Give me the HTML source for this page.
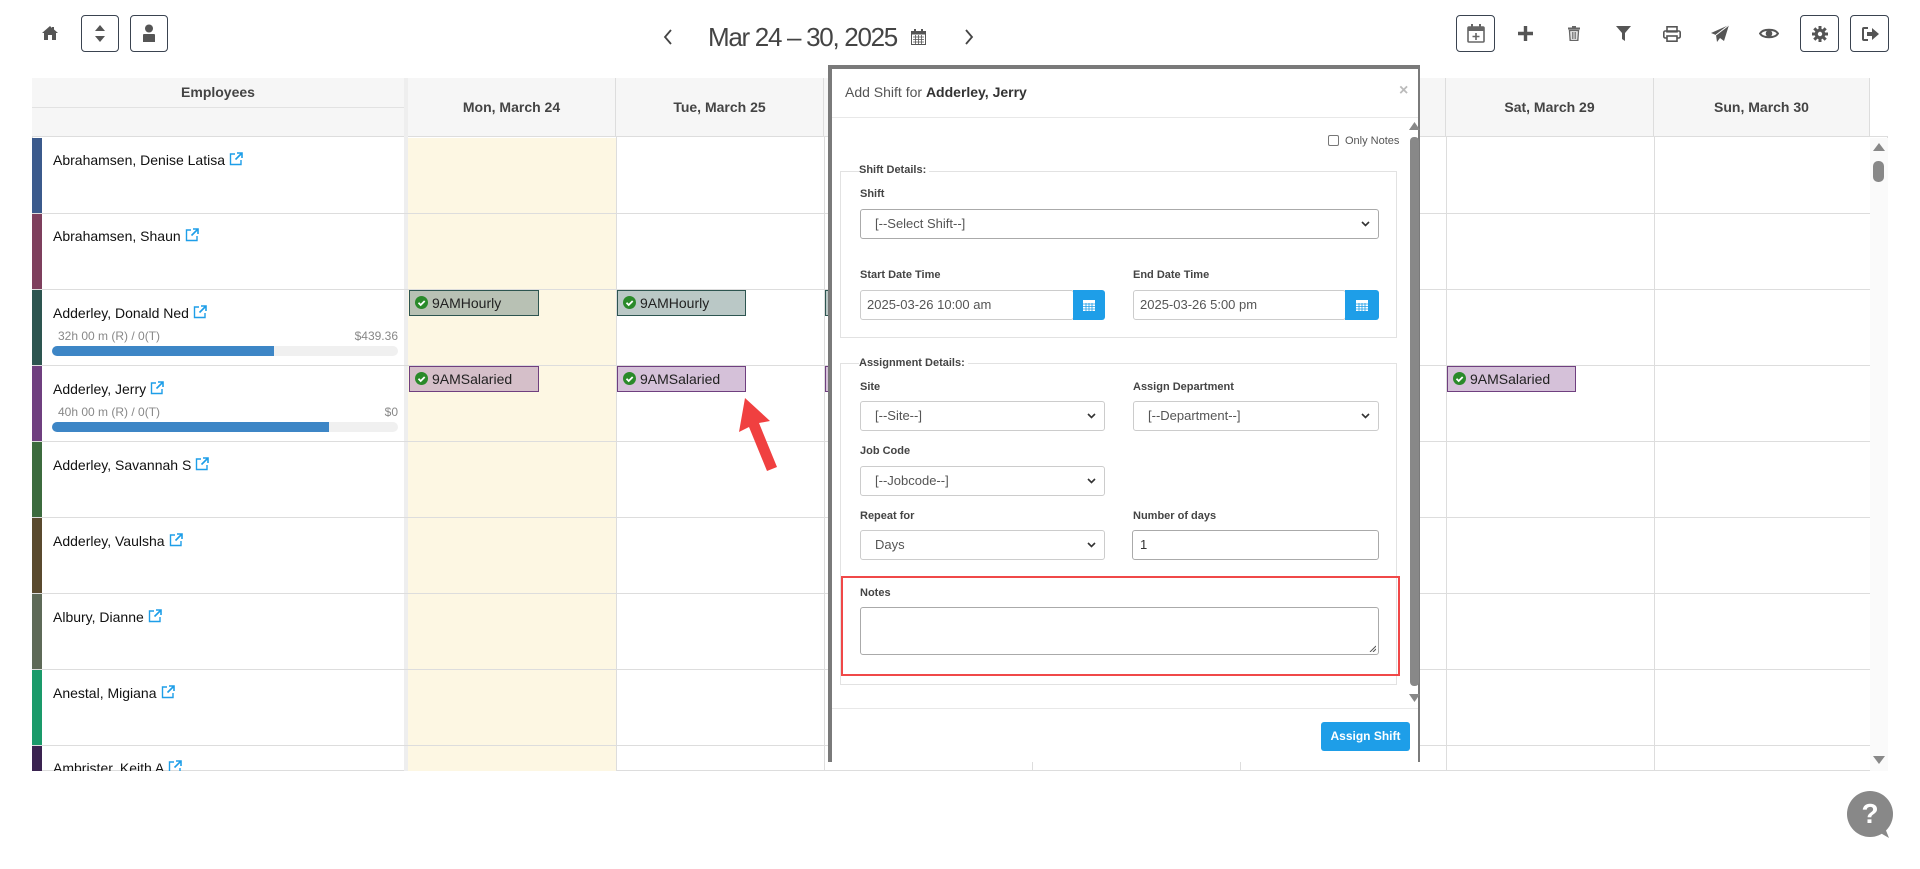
<!DOCTYPE html>
<html><head><meta charset="utf-8">
<style>
*{box-sizing:border-box;margin:0;padding:0}
body{width:1920px;height:869px;position:relative;background:#fff;font-family:"Liberation Sans",Arial,sans-serif;overflow:hidden;color:#222}
.a{position:absolute}
.btn{position:absolute;border:1.5px solid #3a4350;border-radius:4px;background:#fff}
.ico{position:absolute}
.hl{position:absolute;height:1px;background:#ddd}
.vl{position:absolute;width:1px;background:#ddd}
.dh{position:absolute;top:78px;height:59px;font-weight:bold;font-size:14px;color:#444;text-align:center;line-height:59px;background:#f6f6f6;border-right:1px solid #ddd;border-bottom:1px solid #ddd}
.name{position:absolute;left:53px;font-size:14px;color:#111}
.ext{display:inline-block;vertical-align:-1px;margin-left:4px}
.cb{position:absolute;left:32px;width:10px}
.stat{position:absolute;left:58px;width:340px;font-size:12px;color:#888}
.bar{position:absolute;left:52px;width:346px;height:10px;background:#f0f0f0;border-radius:5px;overflow:hidden}
.bar i{display:block;height:10px;background:#3d86c6}
.shift{position:absolute;height:26px;font-size:14px;color:#222;line-height:24px;padding-left:22px}
.shift svg{position:absolute;left:5px;top:5px}
.lbl{position:absolute;font-size:11px;font-weight:bold;color:#444}
.inp{position:absolute;border:1px solid #ccc;border-radius:3px;background:#fff;font-size:13px;color:#555;padding-left:14px}
.cal{position:absolute;background:#1e9ee8;border-radius:0 3px 3px 0}
.chev{position:absolute;right:8px;top:50%;margin-top:-3px}
</style></head><body>

<!-- toolbar left -->
<svg class="ico" style="left:42px;top:26px" width="16" height="14" viewBox="0 0 16 14"><path d="M8 0L0 7h2v7h4V9h4v5h4V7h2L12 3.5V1h-2v1z" fill="#555"/></svg>
<div class="btn" style="left:81px;top:15px;width:38px;height:37px"><svg class="ico" style="left:13px;top:9px" width="10" height="17" viewBox="0 0 10 17"><path d="M5 0L10 6H0zM5 17L0 11h10z" fill="#555"/></svg></div>
<div class="btn" style="left:130px;top:15px;width:38px;height:37px"><svg class="ico" style="left:12px;top:8px" width="12" height="18" viewBox="0 0 12 18"><circle cx="6" cy="4.5" r="4" fill="#555"/><path d="M1 10h10a1 1 0 0 1 1 1v7H0v-7a1 1 0 0 1 1-1z" fill="#555"/></svg></div>

<!-- title -->
<svg class="ico" style="left:663px;top:29px" width="10" height="16" viewBox="0 0 10 16"><path d="M8 1L2 8l6 7" stroke="#444" stroke-width="1.8" fill="none"/></svg>
<div class="a" style="left:708px;top:22px;font-size:26px;color:#444;letter-spacing:-1.3px;white-space:nowrap">Mar 24 – 30, 2025</div>
<svg class="ico" style="left:911px;top:29px" width="15" height="16" viewBox="0 0 15 16"><rect x="0.5" y="2.5" width="14" height="13" fill="none" stroke="#555"/><rect x="0.5" y="2.5" width="14" height="3" fill="#555"/><rect x="3" y="0" width="2" height="4" fill="#555"/><rect x="10" y="0" width="2" height="4" fill="#555"/><path d="M2 8h11M2 10.5h11M2 13h11M4.5 6v9M7.5 6v9M10.5 6v9" stroke="#555" stroke-width=".8"/></svg>
<svg class="ico" style="left:964px;top:29px" width="10" height="16" viewBox="0 0 10 16"><path d="M2 1l6 7-6 7" stroke="#444" stroke-width="1.8" fill="none"/></svg>

<!-- toolbar right -->
<div class="btn" style="left:1456px;top:15px;width:39px;height:37px"><svg class="ico" style="left:10px;top:8px" width="18" height="19" viewBox="0 0 18 19"><rect x="1" y="3" width="16" height="15" rx="1" fill="none" stroke="#666" stroke-width="1.6"/><rect x="1" y="3" width="16" height="4" fill="#666"/><rect x="4" y="0" width="2" height="5" fill="#666"/><rect x="12" y="0" width="2" height="5" fill="#666"/><path d="M9 9v7M5.5 12.5h7" stroke="#666" stroke-width="1.6"/></svg></div>
<svg class="ico" style="left:1518px;top:26px" width="15" height="15" viewBox="0 0 15 15"><path d="M7.5 0v15M0 7.5h15" stroke="#555" stroke-width="3.4"/></svg>
<svg class="ico" style="left:1568px;top:26px" width="12" height="15" viewBox="0 0 12 15"><rect x="0" y="1.5" width="12" height="2" fill="#666"/><rect x="4" y="0" width="4" height="2" fill="#666"/><path d="M1.5 4.5h9l-.7 10H2.2z" fill="none" stroke="#666" stroke-width="1.4"/><path d="M4.3 6v7M6 6v7M7.7 6v7" stroke="#666" stroke-width="1"/></svg>
<svg class="ico" style="left:1616px;top:26px" width="15" height="15" viewBox="0 0 15 15"><path d="M0 0h15L9 7v8L6 13V7z" fill="#555"/></svg>
<svg class="ico" style="left:1663px;top:26px" width="18" height="16" viewBox="0 0 18 16"><rect x="4" y="0.8" width="10" height="5" fill="none" stroke="#555" stroke-width="1.6"/><rect x="0.8" y="5" width="16.4" height="7" rx="1.5" fill="none" stroke="#555" stroke-width="1.6"/><rect x="4" y="10" width="10" height="5.2" fill="#fff" stroke="#555" stroke-width="1.6"/></svg>
<svg class="ico" style="left:1711px;top:25px" width="18" height="17" viewBox="0 0 18 17"><path d="M18 0L0 8l5 2 1 7 3-4 4 3z" fill="#555"/><path d="M5 10l13-10" stroke="#fff" stroke-width="1"/></svg>
<svg class="ico" style="left:1759px;top:27px" width="20" height="13" viewBox="0 0 20 13"><path d="M1 6.5C4 1.5 16 1.5 19 6.5 16 11.5 4 11.5 1 6.5z" fill="none" stroke="#555" stroke-width="2"/><circle cx="10" cy="6.5" r="3.3" fill="#555"/></svg>
<div class="btn" style="left:1800px;top:15px;width:39px;height:37px"><svg class="ico" style="left:11px;top:10px" width="16" height="16" viewBox="0 0 16 16"><circle cx="8" cy="8" r="5.3" fill="#555"/><path d="M8 0v16M0 8h16M2.3 2.3l11.4 11.4M13.7 2.3L2.3 13.7" stroke="#555" stroke-width="3"/><circle cx="8" cy="8" r="2.2" fill="#fff"/></svg></div>
<div class="btn" style="left:1850px;top:15px;width:39px;height:37px"><svg class="ico" style="left:11px;top:11px" width="17" height="14" viewBox="0 0 17 14"><path d="M6 1H2a1 1 0 0 0-1 1v10a1 1 0 0 0 1 1h4" stroke="#555" stroke-width="2" fill="none"/><path d="M5 5h5V1l7 6-7 6V9H5z" fill="#555"/></svg></div>

<!-- table -->
<div class="a" style="left:32px;top:78px;width:1856px;height:693px;border:1px solid #ddd"></div>
<div class="a" style="left:32px;top:78px;width:372px;height:59px;background:#f6f6f6;border-bottom:1px solid #ddd"></div>
<div class="hl" style="left:32px;top:107px;width:372px;background:#e2e2e2"></div>
<div class="a" style="left:32px;top:78px;width:372px;height:29px;text-align:center;font-weight:bold;font-size:14px;color:#444;line-height:29px">Employees</div>
<div class="a" style="left:404px;top:78px;width:4px;height:693px;background:#eee"></div>
<div class="dh" style="left:408px;width:208px">Mon, March 24</div>
<div class="dh" style="left:616px;width:208px">Tue, March 25</div>
<div class="dh" style="left:824px;width:208px">Wed, March 26</div>
<div class="dh" style="left:1032px;width:208px">Thu, March 27</div>
<div class="dh" style="left:1240px;width:206px">Fri, March 28</div>
<div class="dh" style="left:1446px;width:208px">Sat, March 29</div>
<div class="dh" style="left:1654px;width:216px">Sun, March 30</div>
<div class="a" style="left:1870px;top:78px;width:18px;height:59px;background:#fff;border-bottom:1px solid #ddd"></div>
<!-- today column -->
<div class="a" style="left:408px;top:138px;width:208px;height:633px;background:#fdf7e3"></div>
<!-- vertical lines -->
<div class="vl" style="left:616px;top:137px;height:634px"></div>
<div class="vl" style="left:824px;top:137px;height:634px"></div>
<div class="vl" style="left:1032px;top:137px;height:634px"></div>
<div class="vl" style="left:1240px;top:137px;height:634px"></div>
<div class="vl" style="left:1446px;top:137px;height:634px"></div>
<div class="vl" style="left:1654px;top:137px;height:634px"></div>
<!-- horizontal lines -->
<div class="hl" style="left:32px;top:213px;width:1838px"></div>
<div class="hl" style="left:32px;top:289px;width:1838px"></div>
<div class="hl" style="left:32px;top:365px;width:1838px"></div>
<div class="hl" style="left:32px;top:441px;width:1838px"></div>
<div class="hl" style="left:32px;top:517px;width:1838px"></div>
<div class="hl" style="left:32px;top:593px;width:1838px"></div>
<div class="hl" style="left:32px;top:669px;width:1838px"></div>
<div class="hl" style="left:32px;top:745px;width:1838px"></div>
<!-- scrollbar -->
<div class="a" style="left:1870px;top:138px;width:18px;height:633px;background:#fafafa"></div>
<svg class="ico" style="left:1873px;top:143px" width="12" height="9"><path d="M6 0l6 8H0z" fill="#888"/></svg>
<div class="a" style="left:1873px;top:161px;width:11px;height:21px;background:#888;border-radius:5px"></div>
<svg class="ico" style="left:1873px;top:756px" width="12" height="9"><path d="M0 0h12L6 8z" fill="#888"/></svg>

<!-- color bars -->
<div class="cb" style="top:138px;height:75px;background:#3b5a8c"></div>
<div class="cb" style="top:214px;height:75px;background:#7e3f5d"></div>
<div class="cb" style="top:290px;height:75px;background:#2d5550"></div>
<div class="cb" style="top:366px;height:75px;background:#6f3f7f"></div>
<div class="cb" style="top:442px;height:75px;background:#3c6b3e"></div>
<div class="cb" style="top:518px;height:75px;background:#5a4a2e"></div>
<div class="cb" style="top:594px;height:75px;background:#5e6a58"></div>
<div class="cb" style="top:670px;height:75px;background:#1a9a6a"></div>
<div class="cb" style="top:746px;height:25px;background:#3a2350"></div>

<!-- names -->
<div class="name" style="top:152px">Abrahamsen, Denise Latisa<svg class="ext" width="14" height="14" viewBox="0 0 14 14"><path d="M6 2H1.5v10.5H12V8" fill="none" stroke="#1e9ee8" stroke-width="1.4"/><path d="M8 1h5v5M13 1L6.5 7.5" fill="none" stroke="#1e9ee8" stroke-width="1.6"/></svg></div>
<div class="name" style="top:228px">Abrahamsen, Shaun<svg class="ext" width="14" height="14" viewBox="0 0 14 14"><path d="M6 2H1.5v10.5H12V8" fill="none" stroke="#1e9ee8" stroke-width="1.4"/><path d="M8 1h5v5M13 1L6.5 7.5" fill="none" stroke="#1e9ee8" stroke-width="1.6"/></svg></div>
<div class="name" style="top:305px">Adderley, Donald Ned<svg class="ext" width="14" height="14" viewBox="0 0 14 14"><path d="M6 2H1.5v10.5H12V8" fill="none" stroke="#1e9ee8" stroke-width="1.4"/><path d="M8 1h5v5M13 1L6.5 7.5" fill="none" stroke="#1e9ee8" stroke-width="1.6"/></svg></div>
<div class="stat" style="top:329px">32h 00 m (R) / 0(T)<span style="float:right">$439.36</span></div>
<div class="bar" style="top:346px"><i style="width:222px"></i></div>
<div class="name" style="top:381px">Adderley, Jerry<svg class="ext" width="14" height="14" viewBox="0 0 14 14"><path d="M6 2H1.5v10.5H12V8" fill="none" stroke="#1e9ee8" stroke-width="1.4"/><path d="M8 1h5v5M13 1L6.5 7.5" fill="none" stroke="#1e9ee8" stroke-width="1.6"/></svg></div>
<div class="stat" style="top:405px">40h 00 m (R) / 0(T)<span style="float:right">$0</span></div>
<div class="bar" style="top:422px"><i style="width:277px"></i></div>
<div class="name" style="top:457px">Adderley, Savannah S<svg class="ext" width="14" height="14" viewBox="0 0 14 14"><path d="M6 2H1.5v10.5H12V8" fill="none" stroke="#1e9ee8" stroke-width="1.4"/><path d="M8 1h5v5M13 1L6.5 7.5" fill="none" stroke="#1e9ee8" stroke-width="1.6"/></svg></div>
<div class="name" style="top:533px">Adderley, Vaulsha<svg class="ext" width="14" height="14" viewBox="0 0 14 14"><path d="M6 2H1.5v10.5H12V8" fill="none" stroke="#1e9ee8" stroke-width="1.4"/><path d="M8 1h5v5M13 1L6.5 7.5" fill="none" stroke="#1e9ee8" stroke-width="1.6"/></svg></div>
<div class="name" style="top:609px">Albury, Dianne<svg class="ext" width="14" height="14" viewBox="0 0 14 14"><path d="M6 2H1.5v10.5H12V8" fill="none" stroke="#1e9ee8" stroke-width="1.4"/><path d="M8 1h5v5M13 1L6.5 7.5" fill="none" stroke="#1e9ee8" stroke-width="1.6"/></svg></div>
<div class="name" style="top:685px">Anestal, Migiana<svg class="ext" width="14" height="14" viewBox="0 0 14 14"><path d="M6 2H1.5v10.5H12V8" fill="none" stroke="#1e9ee8" stroke-width="1.4"/><path d="M8 1h5v5M13 1L6.5 7.5" fill="none" stroke="#1e9ee8" stroke-width="1.6"/></svg></div>
<div class="a" style="left:42px;top:746px;width:362px;height:25px;overflow:hidden"><div class="name" style="left:11px;top:14px">Ambrister, Keith A<svg class="ext" width="14" height="14" viewBox="0 0 14 14"><path d="M6 2H1.5v10.5H12V8" fill="none" stroke="#1e9ee8" stroke-width="1.4"/><path d="M8 1h5v5M13 1L6.5 7.5" fill="none" stroke="#1e9ee8" stroke-width="1.6"/></svg></div></div>

<!-- shifts -->
<div class="shift" style="left:409px;top:290px;width:130px;background:#b8c1b4;border:1px solid #2d5550"><svg width="13" height="13"><circle cx="6.5" cy="6.5" r="6.5" fill="#2a8a2a"/><path d="M3.5 6.8l2.2 2.2 4-4" stroke="#fff" stroke-width="1.8" fill="none"/></svg>9AMHourly</div>
<div class="shift" style="left:617px;top:290px;width:129px;background:#bac8c6;border:1px solid #2d5550"><svg width="13" height="13"><circle cx="6.5" cy="6.5" r="6.5" fill="#2a8a2a"/><path d="M3.5 6.8l2.2 2.2 4-4" stroke="#fff" stroke-width="1.8" fill="none"/></svg>9AMHourly</div>
<div class="shift" style="left:825px;top:290px;width:10px;background:#bac8c6;border:1px solid #2d5550"></div>
<div class="shift" style="left:409px;top:366px;width:130px;background:#d5bfc9;border:1px solid #6f3f7f"><svg width="13" height="13"><circle cx="6.5" cy="6.5" r="6.5" fill="#2a8a2a"/><path d="M3.5 6.8l2.2 2.2 4-4" stroke="#fff" stroke-width="1.8" fill="none"/></svg>9AMSalaried</div>
<div class="shift" style="left:617px;top:366px;width:129px;background:#d5c1d9;border:1px solid #6f3f7f"><svg width="13" height="13"><circle cx="6.5" cy="6.5" r="6.5" fill="#2a8a2a"/><path d="M3.5 6.8l2.2 2.2 4-4" stroke="#fff" stroke-width="1.8" fill="none"/></svg>9AMSalaried</div>
<div class="shift" style="left:825px;top:366px;width:10px;background:#d5c1d9;border:1px solid #6f3f7f"></div>
<div class="shift" style="left:1447px;top:366px;width:129px;background:#d5c1d9;border:1px solid #6f3f7f"><svg width="13" height="13"><circle cx="6.5" cy="6.5" r="6.5" fill="#2a8a2a"/><path d="M3.5 6.8l2.2 2.2 4-4" stroke="#fff" stroke-width="1.8" fill="none"/></svg>9AMSalaried</div>

<!-- red arrow -->
<svg class="ico" style="left:735px;top:392px" width="60" height="85" viewBox="0 0 60 85"><path d="M10 6L4 40l10-5 18 44 10-4-18-44 11-2z" fill="#f04040"/></svg>

<!-- modal frame -->
<div class="a" style="left:828px;top:65px;width:592px;height:697px;background:#7a7a7a"></div>
<div class="a" style="left:832px;top:69px;width:586px;height:693px;background:#fff"></div>
<div class="a" style="left:845px;top:84px;font-size:14px;color:#555">Add Shift for <b style="color:#333">Adderley, Jerry</b></div>
<div class="a" style="left:1399px;top:82px;font-size:16px;color:#bbb;font-weight:bold">×</div>
<div class="hl" style="left:832px;top:117px;width:586px;background:#e8e8e8"></div>
<!-- modal scrollbar -->
<svg class="ico" style="left:1409px;top:122px" width="11" height="8"><path d="M5.5 0L11 8H0z" fill="#888"/></svg>
<div class="a" style="left:1410px;top:137px;width:9px;height:549px;background:#888;border-radius:4px"></div>
<svg class="ico" style="left:1409px;top:694px" width="11" height="8"><path d="M0 0h11L5.5 8z" fill="#888"/></svg>

<div class="a" style="left:1328px;top:135px;width:11px;height:11px;border:1px solid #777;border-radius:2px"></div>
<div class="a" style="left:1345px;top:135px;font-size:11px;color:#555">Only Notes</div>

<div class="a" style="left:840px;top:171px;width:557px;height:167px;border:1px solid #e2e2e2"></div>
<div class="lbl" style="left:859px;top:164px;background:#fff;padding-right:3px">Shift Details:</div>
<div class="lbl" style="left:860px;top:188px">Shift</div>
<div class="inp" style="left:860px;top:209px;width:519px;height:30px;line-height:28px;border-color:#aaa">[--Select Shift--]<svg class="chev" width="9" height="6"><path d="M1 1l3.5 3.5L8 1" stroke="#333" stroke-width="1.6" fill="none"/></svg></div>
<div class="lbl" style="left:860px;top:269px">Start Date Time</div>
<div class="lbl" style="left:1133px;top:269px">End Date Time</div>
<div class="inp" style="left:860px;top:290px;width:214px;height:30px;line-height:28px;padding-left:6px">2025-03-26 10:00 am</div>
<div class="cal" style="left:1073px;top:290px;width:32px;height:30px"><svg class="ico" style="left:10px;top:9px" width="12" height="12" viewBox="0 0 12 12"><rect x="0" y="1" width="12" height="11" fill="#fff"/><path d="M0 5h12M0 7.5h12M0 10h12M3 4v8M6 4v8M9 4v8" stroke="#1e9ee8" stroke-width=".8"/></svg></div>
<div class="inp" style="left:1133px;top:290px;width:213px;height:30px;line-height:28px;padding-left:6px">2025-03-26 5:00 pm</div>
<div class="cal" style="left:1345px;top:290px;width:34px;height:30px"><svg class="ico" style="left:11px;top:9px" width="12" height="12" viewBox="0 0 12 12"><rect x="0" y="1" width="12" height="11" fill="#fff"/><path d="M0 5h12M0 7.5h12M0 10h12M3 4v8M6 4v8M9 4v8" stroke="#1e9ee8" stroke-width=".8"/></svg></div>

<div class="a" style="left:840px;top:363px;width:557px;height:322px;border:1px solid #e2e2e2"></div>
<div class="lbl" style="left:859px;top:357px;background:#fff;padding-right:3px">Assignment Details:</div>
<div class="lbl" style="left:860px;top:381px">Site</div>
<div class="lbl" style="left:1133px;top:381px">Assign Department</div>
<div class="inp" style="left:860px;top:401px;width:245px;height:30px;line-height:28px">[--Site--]<svg class="chev" width="9" height="6"><path d="M1 1l3.5 3.5L8 1" stroke="#333" stroke-width="1.6" fill="none"/></svg></div>
<div class="inp" style="left:1133px;top:401px;width:246px;height:30px;line-height:28px">[--Department--]<svg class="chev" width="9" height="6"><path d="M1 1l3.5 3.5L8 1" stroke="#333" stroke-width="1.6" fill="none"/></svg></div>
<div class="lbl" style="left:860px;top:445px">Job Code</div>
<div class="inp" style="left:860px;top:466px;width:245px;height:30px;line-height:28px">[--Jobcode--]<svg class="chev" width="9" height="6"><path d="M1 1l3.5 3.5L8 1" stroke="#333" stroke-width="1.6" fill="none"/></svg></div>
<div class="lbl" style="left:860px;top:510px">Repeat for</div>
<div class="lbl" style="left:1133px;top:510px">Number of days</div>
<div class="inp" style="left:860px;top:530px;width:245px;height:30px;line-height:28px">Days<svg class="chev" width="9" height="6"><path d="M1 1l3.5 3.5L8 1" stroke="#333" stroke-width="1.6" fill="none"/></svg></div>
<div class="inp" style="left:1132px;top:530px;width:247px;height:30px;line-height:28px;padding-left:7px;border-color:#aaa;color:#333">1</div>
<div class="lbl" style="left:860px;top:587px">Notes</div>
<div class="inp" style="left:860px;top:607px;width:519px;height:48px;border-color:#aaa"><svg class="ico" style="right:2px;bottom:2px" width="7" height="7"><path d="M7 1L1 7M7 4L4 7" stroke="#555" stroke-width="1"/></svg></div>
<div class="a" style="left:841px;top:576px;width:559px;height:100px;border:2px solid #f04848"></div>

<div class="hl" style="left:832px;top:708px;width:586px;background:#e8e8e8"></div>
<div class="a" style="left:1321px;top:722px;width:89px;height:29px;background:#1e9ee8;border-radius:3px;color:#fff;font-size:12px;font-weight:bold;text-align:center;line-height:29px">Assign Shift</div>

<!-- help -->
<svg class="ico" style="left:1847px;top:791px" width="48" height="48" viewBox="0 0 48 48"><circle cx="23" cy="23" r="23" fill="#888"/><path d="M30 40l12 7-4-10z" fill="#888"/><text x="23" y="32" text-anchor="middle" font-family="Liberation Sans,sans-serif" font-weight="bold" font-size="28" fill="#fff">?</text></svg>
</body></html>
